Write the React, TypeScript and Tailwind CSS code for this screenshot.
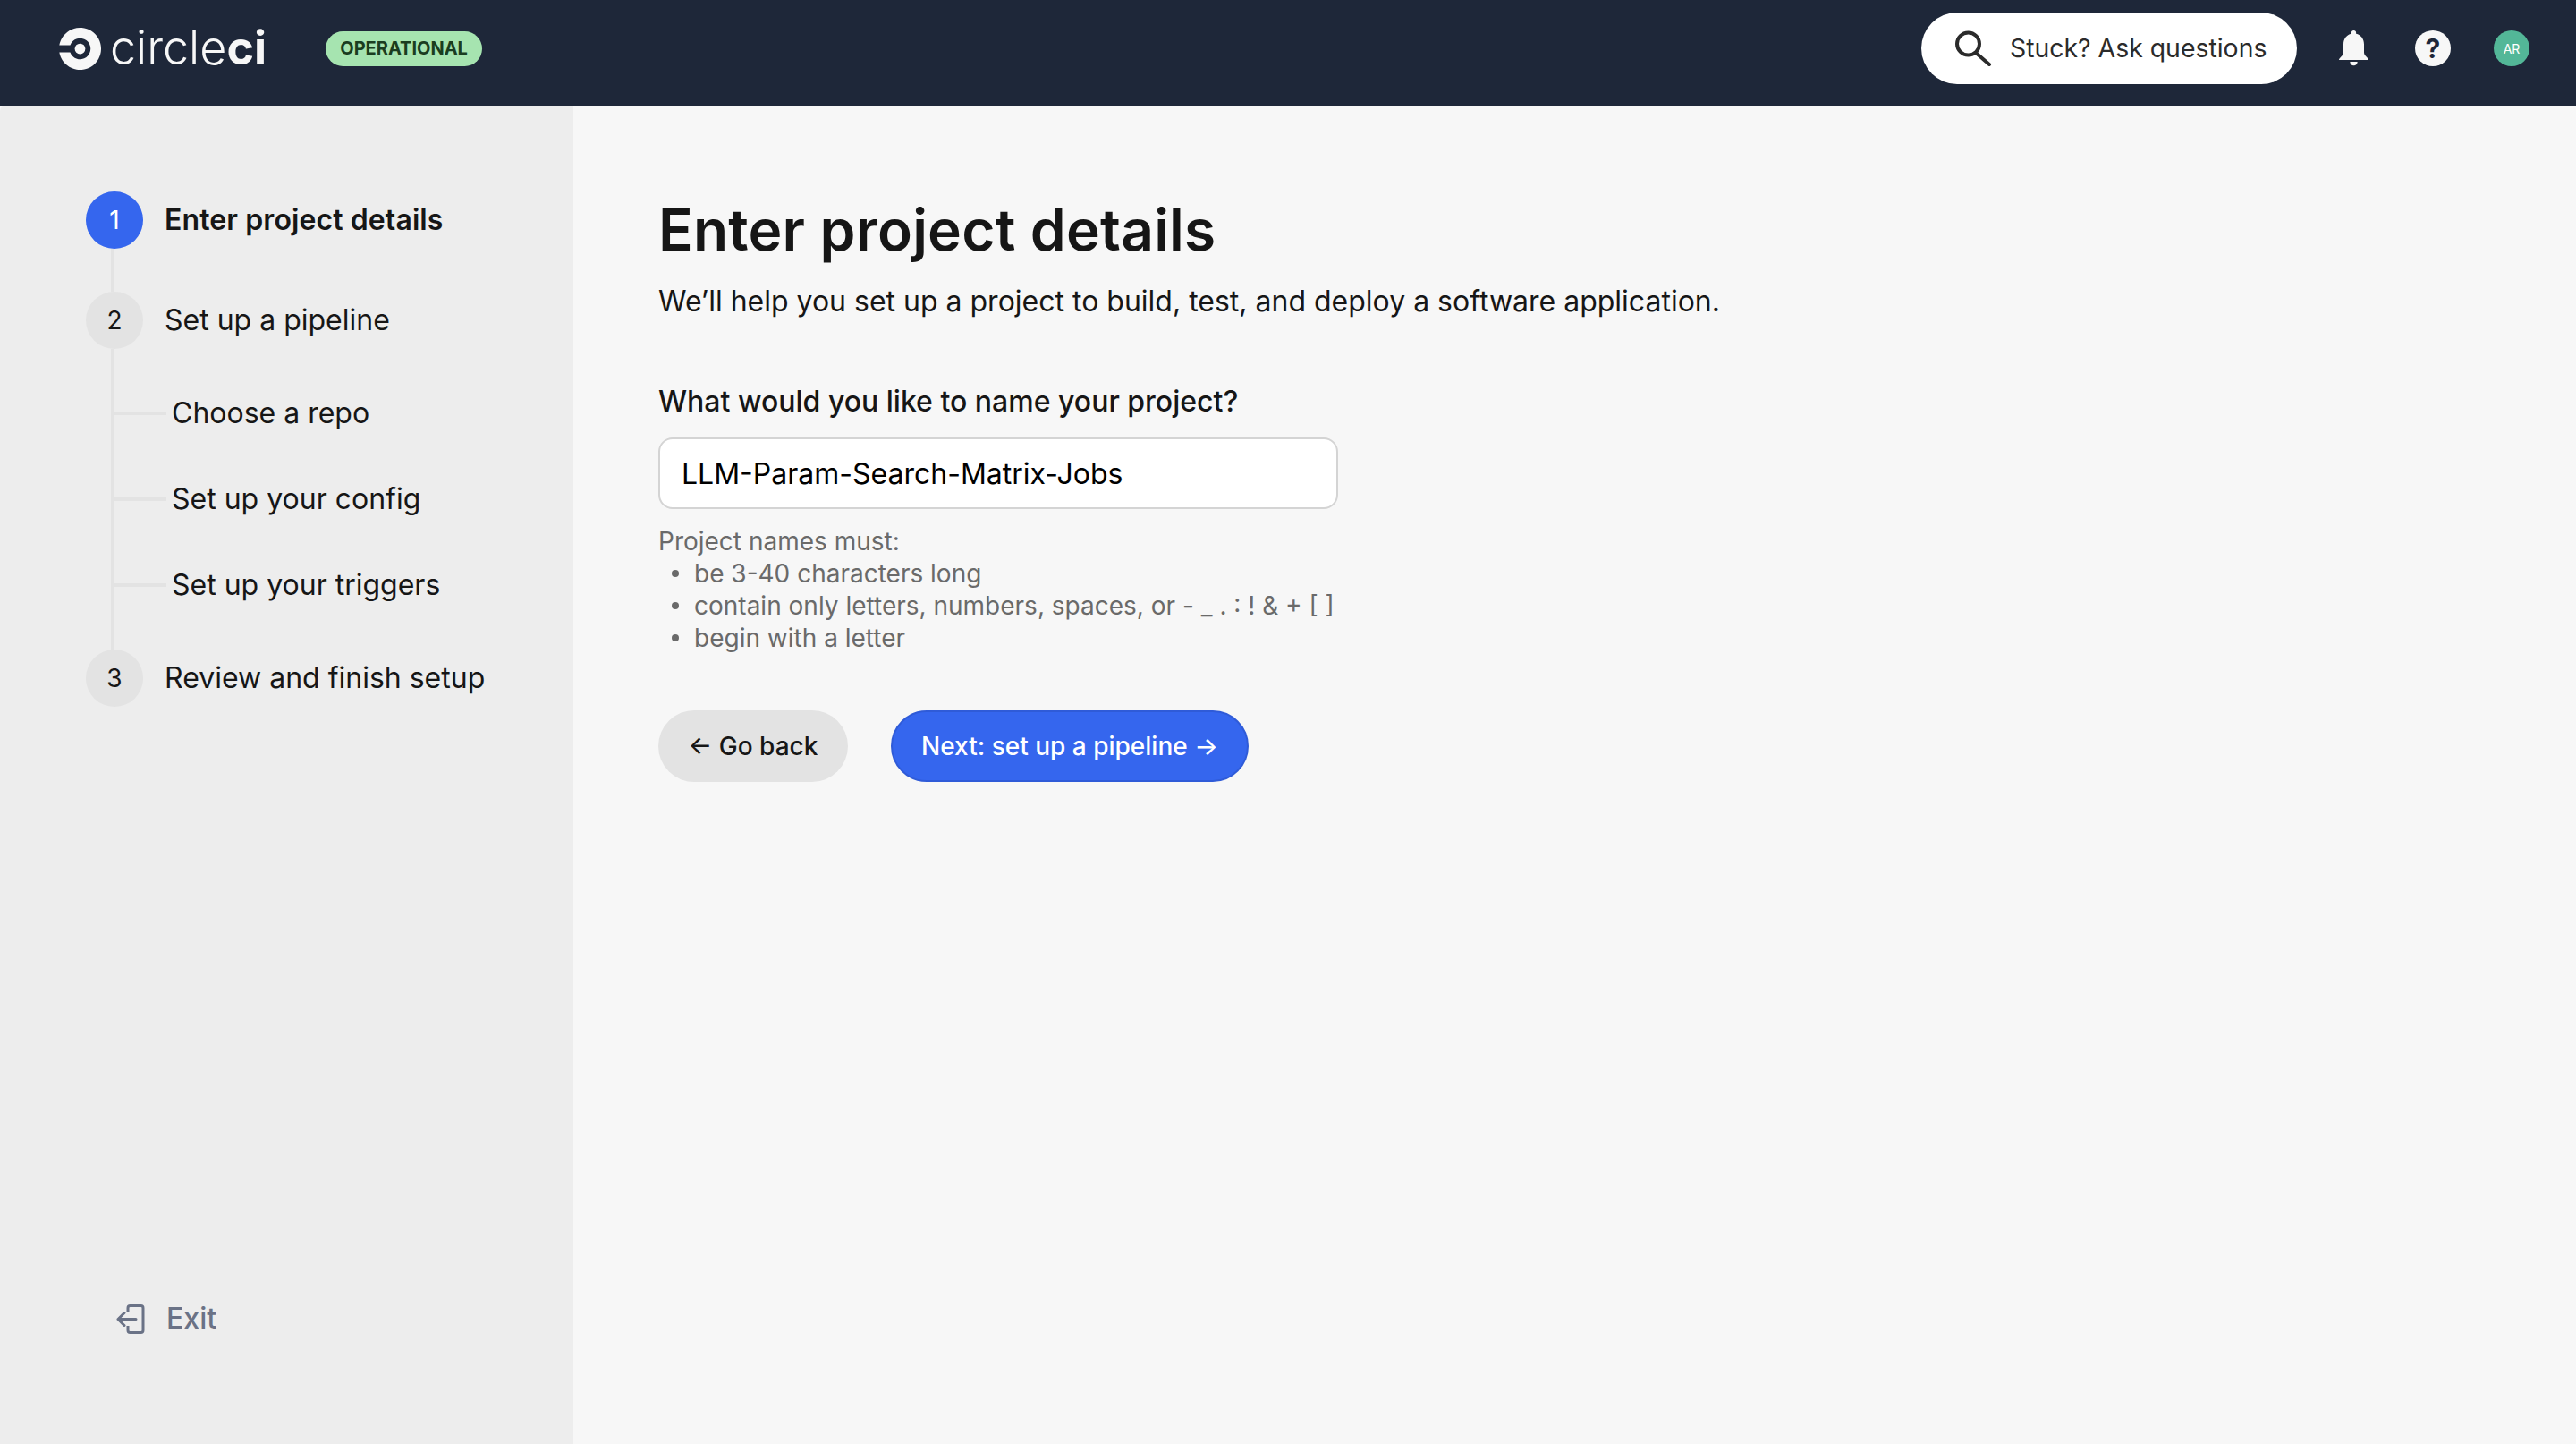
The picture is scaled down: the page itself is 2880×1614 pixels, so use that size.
import React from "react";

const Logo = () => (
  <svg viewBox="0 0 48 48" className="h-[47px] w-[47px] fill-[#f7f7f7]">
    <path
      fillRule="evenodd"
      d="M0.34 20A24 24 0 1 1 0.34 28L12.7 28A12 12 0 1 0 12.7 20Z"
    />
    <circle cx="24" cy="24" r="6" />
  </svg>
);

const SearchIcon = () => (
  <svg viewBox="0 0 42 40" className="h-10 w-[42px] fill-none stroke-[#2b2b2b] stroke-[4]">
    <circle cx="15.5" cy="15" r="12.5" />
    <path d="M24 25L39 38" strokeLinecap="round" />
  </svg>
);

const BellIcon = () => (
  <svg viewBox="0 0 33 40" className="h-10 w-[33px] fill-[#f7f7f7]">
    <path d="M16.5 0a2.6 2.6 0 0 1 2.6 2.6v1.2C24.6 5 28 9.6 28 15.4v9.4c0 2.4 1.6 3.7 3.6 5.6.9.9 1.4 1.6 1.4 2.6H0c0-1 .5-1.7 1.4-2.6 2-1.9 3.6-3.2 3.6-5.6v-9.4C5 9.6 8.4 5 13.9 3.8V2.6A2.6 2.6 0 0 1 16.5 0z" />
    <path d="M12.3 35h8.4a4.2 4.2 0 0 1-8.4 0z" />
  </svg>
);

const HelpIcon = () => (
  <div className="flex h-10 w-10 items-center justify-center rounded-full bg-[#f7f7f7] text-[30px] font-bold leading-none text-[#1e2739]">
    ?
  </div>
);

const ExitIcon = () => (
  <svg viewBox="0 0 33 33" className="h-[33px] w-[33px] fill-none stroke-[#6a7286] stroke-[3]">
    <path d="M13 9V4a2.5 2.5 0 0 1 2.5-2.5h12A2.5 2.5 0 0 1 30 4v25a2.5 2.5 0 0 1-2.5 2.5h-12A2.5 2.5 0 0 1 13 29v-5" />
    <path d="M22 16.5H2M9 9.5l-7 7 7 7" strokeLinecap="round" strokeLinejoin="round" />
  </svg>
);

const StepCircle = ({ n, active }: { n: number; active?: boolean }) => (
  <div
    className={
      active
        ? "flex h-16 w-16 shrink-0 items-center justify-center rounded-full bg-[#3566ee] text-[28px] text-white"
        : "flex h-16 w-16 shrink-0 items-center justify-center rounded-full bg-[#e3e3e3] text-[28px] text-[#161616]"
    }
  >
    {n}
  </div>
);

const subSteps = ["Choose a repo", "Set up your config", "Set up your triggers"];
const rules = [
  "be 3-40 characters long",
  "contain only letters, numbers, spaces, or - _ . : ! & + [ ]",
  "begin with a letter",
];

export default function App() {
  return (
    <div className="flex h-[1614px] w-[2880px] flex-col overflow-hidden bg-[#f7f7f7] font-[Inter,sans-serif] text-[#161616]">
      <header className="flex h-[118px] shrink-0 items-center justify-between bg-[#1e2739] pb-[10px] pl-[66px] pr-[52px]">
        <div className="flex items-center">
          <Logo />
          <div className="ml-[10px] text-[52px] font-light leading-none text-[#f7f7f7]">
            circle<span className="font-bold">ci</span>
          </div>
          <div className="ml-[66px] flex h-[39px] w-[175px] items-center justify-center rounded-full bg-[#a6e4b0] text-[20px] font-bold text-[#1a3d20]">
            OPERATIONAL
          </div>
        </div>
        <div className="flex items-center">
          <div className="flex h-20 w-[420px] items-center rounded-full bg-white pl-[37px] text-[28.4px] text-[#2b2b2b]">
            <SearchIcon />
            <span className="ml-5">Stuck? Ask questions</span>
          </div>
          <div className="ml-[47px]"><BellIcon /></div>
          <div className="ml-[52px]"><HelpIcon /></div>
          <div className="ml-12 flex h-10 w-10 items-center justify-center rounded-full bg-[#53b798] text-[14px] text-white">
            AR
          </div>
        </div>
      </header>

      <div className="flex min-h-0 flex-1">
        <aside className="flex w-[641px] shrink-0 flex-col justify-between rounded-tl-md bg-[#ededed] pb-[116px] pl-[96px] pt-[96px]">
          <nav className="text-[32px]">
            <div className="flex items-center gap-[24px]">
              <StepCircle n={1} active />
              <span className="font-semibold tracking-[0.1px]">Enter project details</span>
            </div>
            <div className="ml-7 h-12 w-1 bg-[#e3e3e3]" />
            <div className="flex items-center gap-[24px]">
              <StepCircle n={2} />
              <span>Set up a pipeline</span>
            </div>
            <div className="ml-7 border-l-4 border-[#e3e3e3] py-6">
              {subSteps.map((s) => (
                <div key={s} className="flex h-24 items-center">
                  <div className="h-1 w-[58px] bg-[#e3e3e3]" />
                  <span className="ml-[6px]">{s}</span>
                </div>
              ))}
            </div>
            <div className="flex items-center gap-[24px]">
              <StepCircle n={3} />
              <span>Review and finish setup</span>
            </div>
          </nav>
          <div className="ml-[34px] flex items-center gap-[23px] text-[32px] font-medium text-[#6a7286]">
            <ExitIcon />
            <span>Exit</span>
          </div>
        </aside>

        <main className="flex-1 pl-[95px] pt-[96px]">
          <h1 className="text-[64px] font-semibold leading-[86px] tracking-[0.22px]">Enter project details</h1>
          <p className="mt-[13px] text-[32px] leading-[48px]">
            We’ll help you set up a project to build, test, and deploy a software application.
          </p>
          <label className="mt-[64px] block text-[32px] font-medium leading-[48px]">
            What would you like to name your project?
          </label>
          <div className="mt-[16px] flex h-20 w-[760px] items-center rounded-2xl border-2 border-[#d4d4d4] bg-white pl-6 pt-[2px] text-[32px] text-black">
            LLM-Param-Search-Matrix-Jobs
          </div>
          <div className="mt-[18px] text-[28px] leading-9 text-[#6a6a6a]">
            <div>Project names must:</div>
            <ul>
              {rules.map((r) => (
                <li key={r} className="flex items-center">
                  <span className="ml-[15px] h-2 w-2 rounded-full bg-[#6a6a6a]" />
                  <span className="ml-[17px]">{r}</span>
                </li>
              ))}
            </ul>
          </div>
          <div className="mt-[63px] flex gap-12 text-[28px] font-medium">
            <button className="flex h-20 w-[212px] items-center justify-center rounded-full bg-[#e3e3e3] text-[#161616]">
              ← Go back
            </button>
            <button className="flex h-20 w-[400px] items-center justify-center rounded-full border-2 border-[#2f5bd8] bg-[#3566ee] text-white">
              Next: set up a pipeline →
            </button>
          </div>
        </main>
      </div>
    </div>
  );
}
